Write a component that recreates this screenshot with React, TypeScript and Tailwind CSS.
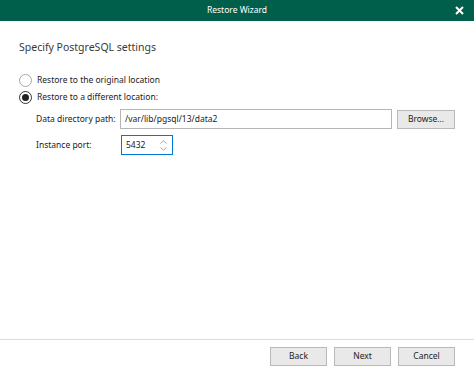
import { useState } from 'react';

const font = { fontFamily: '"Noto Sans", "Open Sans", sans-serif' };

function Radio({ checked, label, onClick }: { checked: boolean; label: string; onClick: () => void }) {
  return (
    <div className="flex items-center h-[17px] cursor-default" onClick={onClick}>
      <span
        className={
          'flex items-center justify-center w-[13px] h-[13px] rounded-full border bg-white ' +
          (checked ? 'border-[#333333]' : 'border-[#a8a8a8]')
        }
      >
        {checked && <span className="w-[7px] h-[7px] rounded-full bg-[#222222]" />}
      </span>
      <span className="ml-[5px] text-[8.5px] leading-none text-[#222222]">{label}</span>
    </div>
  );
}

function Button({ children }: { children: string }) {
  return (
    <button className="w-[57px] h-[19px] border border-[#b9b9b9] bg-[#e9e9e9] text-[8.5px] text-[#222222] leading-none">
      {children}
    </button>
  );
}

export default function App() {
  const [mode, setMode] = useState<'original' | 'different'>('different');

  return (
    <div className="w-[474px] h-[372px] bg-white flex flex-col overflow-hidden" style={font}>
      {/* Title bar */}
      <div className="relative h-[21px] bg-[#005f4b] flex items-center justify-center shrink-0">
        <span className="text-[8.5px] leading-none text-white">Restore Wizard</span>
        <svg className="absolute right-[10px] top-[6px]" width="9" height="9" viewBox="0 0 9 9">
          <path d="M1 1 L8 8 M8 1 L1 8" stroke="white" strokeWidth="2" />
        </svg>
      </div>

      <div className="flex-1 pl-[19px] pr-[19px]">
        <h1 className="mt-[16px] h-[20px] flex items-center text-[10.5px] leading-none text-[#3a3a3a]">
          Specify PostgreSQL settings
        </h1>

        <div className="mt-[15px] flex flex-col">
          <Radio
            checked={mode === 'original'}
            label="Restore to the original location"
            onClick={() => setMode('original')}
          />
          <Radio
            checked={mode === 'different'}
            label="Restore to a different location:"
            onClick={() => setMode('different')}
          />
        </div>

        <div className="ml-[17px] mt-[3px] flex flex-col gap-[6px]">
          <div className="flex items-center">
            <span className="w-[84px] text-[8.5px] leading-none text-[#222222]">Data directory path:</span>
            <div className="w-[272px] h-[20px] border border-[#b5b5b5] flex items-center px-[4px] text-[8.5px] leading-none text-[#222222]">
              /var/lib/pgsql/13/data2
            </div>
            <button className="ml-[5px] w-[58px] h-[19px] border border-[#b9b9b9] bg-[#e9e9e9] text-[8.5px] text-[#222222] leading-none">
              Browse...
            </button>
          </div>
          <div className="flex items-center">
            <span className="w-[85px] text-[8.5px] leading-none text-[#222222]">Instance port:</span>
            <div className="w-[52px] h-[20px] border border-[#0078d7] flex items-center">
              <span className="flex-1 pl-[4px] text-[8.5px] leading-none text-[#222222]">5432</span>
              <div className="w-[15px] h-full flex flex-col items-center justify-center gap-[3px] pr-[2px]">
                <svg width="7" height="4" viewBox="0 0 7 4">
                  <path d="M0.5 3.5 L3.5 0.8 L6.5 3.5" fill="none" stroke="#a6a6a6" strokeWidth="1" />
                </svg>
                <svg width="7" height="4" viewBox="0 0 7 4">
                  <path d="M0.5 0.5 L3.5 3.2 L6.5 0.5" fill="none" stroke="#a6a6a6" strokeWidth="1" />
                </svg>
              </div>
            </div>
          </div>
        </div>
      </div>

      {/* Footer */}
      <div className="shrink-0 border-t border-[#dcdcdc] h-[33px] flex items-start justify-end gap-[7px] pt-[7px] pr-[19px]">
        <Button>Back</Button>
        <Button>Next</Button>
        <Button>Cancel</Button>
      </div>
    </div>
  );
}
